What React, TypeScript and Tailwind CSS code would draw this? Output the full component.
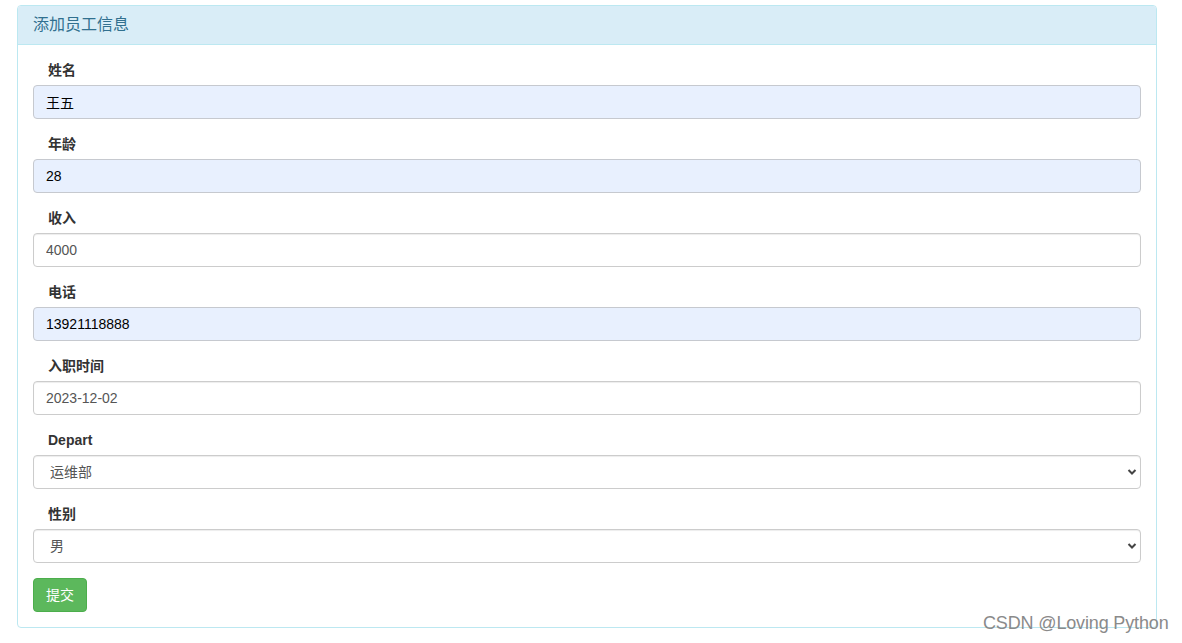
import React from 'react';

const font = { fontFamily: '"Liberation Sans", Arial, "Noto Sans CJK SC", sans-serif' };

interface Field {
  label: string;
  value: string;
  autofill?: boolean;
  select?: boolean;
}

const fields: Field[] = [
  { label: '姓名', value: '王五', autofill: true },
  { label: '年龄', value: '28', autofill: true },
  { label: '收入', value: '4000' },
  { label: '电话', value: '13921118888', autofill: true },
  { label: '入职时间', value: '2023-12-02' },
  { label: 'Depart', value: '运维部', select: true },
  { label: '性别', value: '男', select: true },
];

const Chevron = () => (
  <svg width="10" height="8" viewBox="0 0 10 8" className="absolute right-[4px] top-[13px] pointer-events-none">
    <path d="M1.5 2 L5 5.5 L8.5 2" fill="none" stroke="#444" strokeWidth="2" />
  </svg>
);

const FormRow: React.FC<{ f: Field }> = ({ f }) => (
  <div className="mb-[15px]">
    <label className="block pl-[15px] mb-[5px] h-[20px] leading-[20px] text-[14px] font-bold text-[#333]">{f.label}</label>
    {f.select ? (
      <div className="relative">
        <select
          defaultValue={f.value}
          className="appearance-none block w-full h-[34px] pl-[16px] pr-[24px] text-[14px] text-[#555] bg-white border border-[#ccc] rounded-[4px] shadow-[inset_0_1px_1px_rgba(0,0,0,0.075)] outline-none"
          style={font}
        >
          <option>{f.value}</option>
        </select>
        <Chevron />
      </div>
    ) : (
      <input
        defaultValue={f.value}
        className={`block w-full h-[34px] px-[12px] text-[14px] border rounded-[4px] outline-none ${f.autofill ? 'bg-[#e8f0fe] text-black border-[#c6c9cf]' : 'bg-white text-[#555] border-[#ccc] shadow-[inset_0_1px_1px_rgba(0,0,0,0.075)]'}`}
        style={font}
      />
    )}
  </div>
);

export default function App() {
  return (
    <div className="relative w-[1182px] h-[643px] bg-white" style={font}>
      <div className="pt-[5px] pl-[17px] w-[1157px]">
        <div className="border border-[#bce8f1] rounded-[4px] bg-white">
          <div className="h-[39px] px-[15px] flex items-center bg-[#d9edf7] border-b border-[#bce8f1] rounded-t-[3px] text-[16px] text-[#31708f]">
            添加员工信息
          </div>
          <div className="p-[15px]">
            {fields.map((f, i) => (
              <FormRow key={i} f={f} />
            ))}
            <button className="h-[34px] px-[12px] text-[14px] text-white bg-[#5cb85c] border border-[#4cae4c] rounded-[4px]">
              提交
            </button>
          </div>
        </div>
      </div>
      <div className="absolute left-[983px] top-[610px] text-[18px] text-[#8a8a8a] tracking-[-0.15px] whitespace-nowrap">
        CSDN @Loving Python
      </div>
    </div>
  );
}
